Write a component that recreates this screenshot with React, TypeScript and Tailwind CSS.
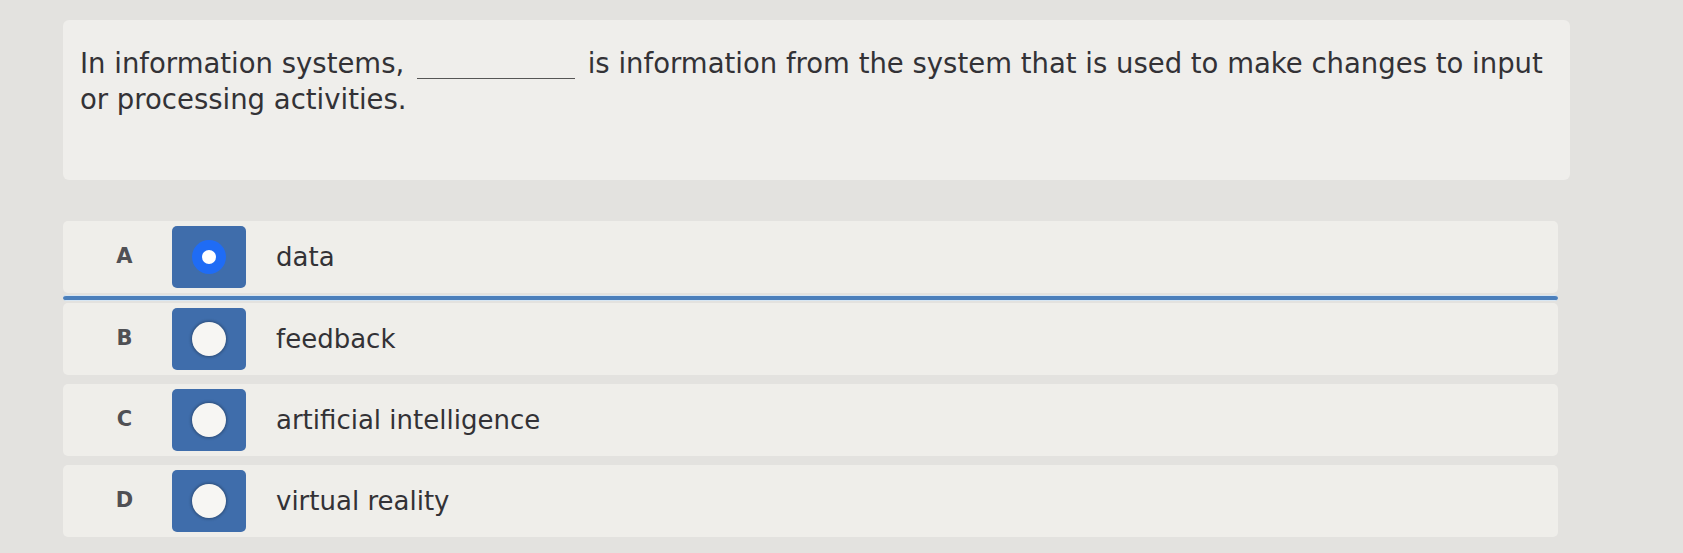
const options = [
  { letter: "A", label: "data", selected: true },
  { letter: "B", label: "feedback", selected: false },
  { letter: "C", label: "artificial intelligence", selected: false },
  { letter: "D", label: "virtual reality", selected: false },
];

function Radio({ selected }: { selected: boolean }) {
  return (
    <div className="w-[74px] h-[62px] shrink-0 rounded-[5px] bg-[#3f6dab] flex items-center justify-center">
      {selected ? (
        <div className="w-[34px] h-[34px] rounded-full bg-[#1f6cf5] flex items-center justify-center">
          <div className="w-[14px] h-[14px] rounded-full bg-white" />
        </div>
      ) : (
        <div className="w-[34px] h-[34px] rounded-full bg-[#f7f6f3] shadow-[0_0_3px_1px_rgba(0,0,0,0.3)]" />
      )}
    </div>
  );
}

export default function App() {
  return (
    <div
      className="w-[1683px] h-[553px] bg-[#e3e2df] pl-[63px] pt-[20px] overflow-hidden text-[#333236]"
      style={{ fontFamily: '"DejaVu Sans", Verdana, sans-serif' }}
    >
      <div className="w-[1507px] h-[160px] bg-[#efeeeb] rounded-[6px] pl-[17px] pt-[25px]">
        <p className="text-[27.5px] leading-[36px] whitespace-nowrap">
          In information systems,{" "}
          <span className="inline-block w-[158px] border-b-[1.5px] border-[#555] align-[-6px] mx-[4px]" />{" "}
          is information from the system that is used to make changes to input
          <br />
          or processing activities.
        </p>
      </div>

      <div className="mt-[41px] w-[1495px] flex flex-col">
        {options.map((o) => (
          <div key={o.letter} className="flex flex-col">
            <div className="h-[72px] bg-[#efeeea] rounded-[5px] flex items-center">
              <div className="w-[109px] text-center text-[21px] font-bold text-[#505054] pl-[14px]">
                {o.letter}
              </div>
              <Radio selected={o.selected} />
              <div className="pl-[30px] text-[26px] text-[#333236]">{o.label}</div>
            </div>
            {o.selected ? (
              <div className="h-[6px] bg-[#4b7fbb] rounded-full my-[2px] border-y border-[#d7e6f3]" />
            ) : (
              <div className="h-[9px]" />
            )}
          </div>
        ))}
      </div>
    </div>
  );
}
